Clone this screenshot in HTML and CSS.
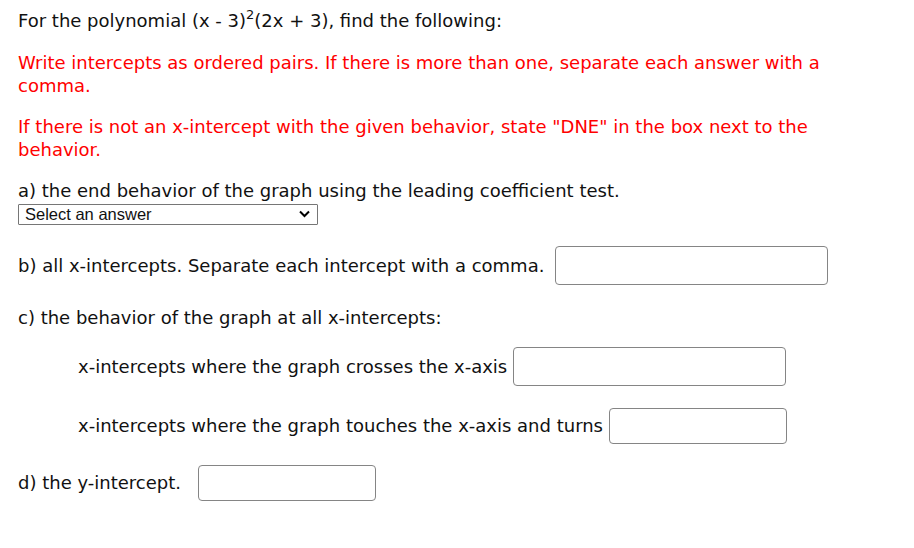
FILE: index.html
```html
<!DOCTYPE html>
<html>
<head>
<meta charset="utf-8">
<link rel="stylesheet" href="styles.css">
</head>
<body>
<div class="page">
  <p class="line">For the polynomial (x - 3)<sup>2</sup>(2x + 3), find the following:</p>
  <p class="note note-1">Write intercepts as ordered pairs. If there is more than one, separate each answer with a comma.</p>
  <p class="note note-2">If there is not an x-intercept with the given behavior, state "DNE" in the box next to the behavior.</p>
  <p class="line part-a">a) the end behavior of the graph using the leading coefficient test.</p>
  <div class="select">
    <span>Select an answer</span>
    <svg class="chev" width="11" height="8" viewBox="0 0 11 8"><path d="M1 1.5 L5.5 6 L10 1.5" fill="none" stroke="#000" stroke-width="2"/></svg>
  </div>
  <div class="row row-b">
    <span>b) all x-intercepts. Separate each intercept with a comma.</span>
    <div class="box box-wide"></div>
  </div>
  <p class="line part-c">c) the behavior of the graph at all x-intercepts:</p>
  <div class="row row-indent row-cross">
    <span>x-intercepts where the graph crosses the x-axis</span>
    <div class="box box-wide"></div>
  </div>
  <div class="row row-indent row-touch">
    <span>x-intercepts where the graph touches the x-axis and turns</span>
    <div class="box box-short"></div>
  </div>
  <div class="row row-d">
    <span>d) the y-intercept.</span>
    <div class="box box-short"></div>
  </div>
</div>
</body>
</html>
```
FILE: styles.css
```css
html, body {
  margin: 0;
  padding: 0;
  background: #fff;
}
.page {
  padding: 9px 18px 0 18px;
  width: 820px;
  font-family: "DejaVu Sans", sans-serif;
  font-size: 18px;
  color: #111;
}
p {
  margin: 0;
}
.line {
  line-height: 23px;
}
sup {
  font-size: 13px;
  line-height: 0;
  vertical-align: 8px;
}
.note {
  color: #ff0000;
  line-height: 22.5px;
}
.note-1 {
  margin-top: 20px;
}
.note-2 {
  margin-top: 19px;
}
.part-a {
  margin-top: 18px;
}
.select {
  margin-top: 1.5px;
  width: 300px;
  height: 21px;
  box-sizing: border-box;
  border: 1px solid #767676;
  border-radius: 1px;
  display: flex;
  align-items: center;
  justify-content: space-between;
  padding: 0 7px 0 6px;
  font-family: "Liberation Sans", Arial, sans-serif;
  font-size: 16.5px;
  line-height: 1;
}
.row {
  display: flex;
  align-items: center;
  gap: 6px;
}
.row-b {
  margin-top: 21px;
  gap: 11px;
}
.part-c {
  margin-top: 21.5px;
}
.row-indent {
  padding-left: 60px;
}
.row-cross {
  margin-top: 17.5px;
}
.row-touch {
  margin-top: 22px;
}
.row-d {
  margin-top: 21px;
  gap: 17px;
}
.box {
  box-sizing: border-box;
  border: 1px solid #858585;
  border-radius: 4px;
  background: #fff;
}
.box-wide {
  width: 273px;
  height: 39px;
}
.box-short {
  width: 178px;
  height: 36px;
}
```
